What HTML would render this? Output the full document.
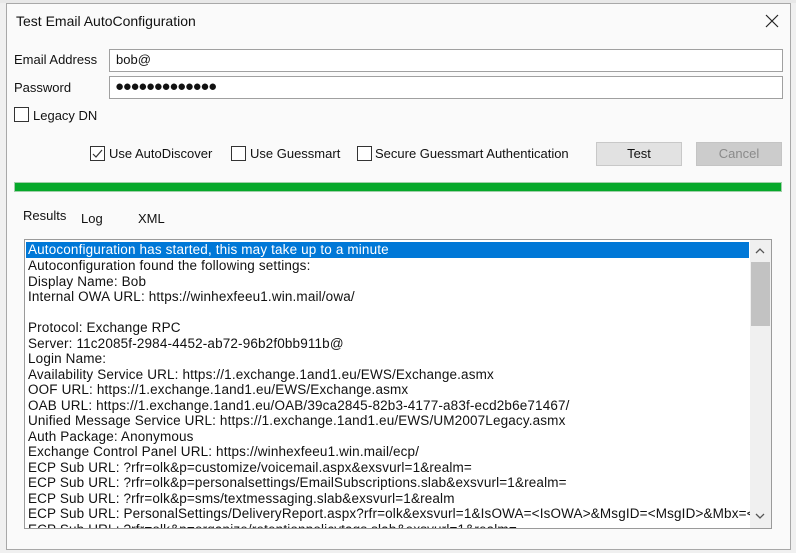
<!DOCTYPE html>
<html><head><style>
body{margin:0;width:796px;height:553px;background:#f0f0f0;position:relative;overflow:hidden;font-family:"Liberation Sans",sans-serif;color:#111}
.dlg{position:absolute;left:6px;top:3px;width:783px;height:545px;background:#fafafa;border:1px solid #a8a8a8;}
.a{position:absolute;white-space:nowrap}
.tb{position:absolute;background:#fff;border:1px solid #a0a0a0;height:21px}
.cb{position:absolute;width:13px;height:13px;border:1px solid #333;background:#fff}
.btn{position:absolute;height:22px;border:1px solid #c8c8c8;background:#e2e2e2;text-align:center;line-height:22px;font-size:13px}
.lst{position:absolute;left:24px;top:239px;width:746px;height:288px;border:1px solid #9a9a9a;background:#fff;overflow:hidden}
.ln{position:absolute;left:3px;font-size:13.5px;height:15.5px;line-height:15.5px;white-space:nowrap;letter-spacing:0.15px}
</style></head><body>
<div style="position:absolute;left:0;top:0;width:796px;height:3px;background:#e8e8e8"></div>
<div class="dlg"></div>
<div class="a" style="left:16px;top:13px;font-size:14px">Test Email AutoConfiguration</div>
<svg class="a" style="left:765px;top:14px" width="14" height="14"><path d="M1 1L13 13M13 1L1 13" stroke="#222" stroke-width="1.2"/></svg>
<div class="a" style="left:14px;top:52px;font-size:13px">Email Address</div>
<div class="tb" style="left:109px;top:49px;width:672px"></div>
<div class="a" style="left:116px;top:52px;font-size:13px">bob@</div>
<div class="a" style="left:14px;top:80px;font-size:13px">Password</div>
<div class="tb" style="left:109px;top:76px;width:672px"></div>
<div class="a" style="left:115px;top:78px;font-size:15px;letter-spacing:-1.3px">●●●●●●●●●●●●●</div>
<div class="cb" style="left:14px;top:107px"></div>
<div class="a" style="left:33px;top:108px;font-size:13px">Legacy DN</div>
<div class="cb" style="left:90px;top:146px"></div>
<svg class="a" style="left:91px;top:147px" width="13" height="13"><path d="M2 7L5 10L11 3" stroke="#333" stroke-width="1.2" fill="none"/></svg>
<div class="a" style="left:109px;top:146px;font-size:13px">Use AutoDiscover</div>
<div class="cb" style="left:231px;top:146px"></div>
<div class="a" style="left:250px;top:146px;font-size:13px">Use Guessmart</div>
<div class="cb" style="left:357px;top:146px"></div>
<div class="a" style="left:375px;top:146px;font-size:13px">Secure Guessmart Authentication</div>
<div class="btn" style="left:596px;top:142px;width:84px">Test</div>
<div class="btn" style="left:696px;top:142px;width:84px;background:#cccccc;color:#8a8a8a;border-color:#c4c4c4">Cancel</div>
<div class="a" style="left:14px;top:182px;width:768px;height:10px;background:#06a82a;border:1px solid #a0cfa8;box-sizing:border-box"></div>
<div class="a" style="left:23px;top:208px;font-size:13px">Results</div>
<div class="a" style="left:81px;top:211px;font-size:13px">Log</div>
<div class="a" style="left:138px;top:211px;font-size:13px">XML</div>
<div class="lst">
<div style="position:absolute;left:1px;top:2px;width:723px;height:16px;background:#0078d7"></div>
<div class="ln" style="top:2px;color:#fff">Autoconfiguration has started, this may take up to a minute</div>
<div class="ln" style="top:18px">Autoconfiguration found the following settings:</div>
<div class="ln" style="top:33.5px">Display Name: Bob</div>
<div class="ln" style="top:49px">Internal OWA URL: https://winhexfeeu1.win.mail/owa/</div>
<div class="ln" style="top:80px">Protocol: Exchange RPC</div>
<div class="ln" style="top:95.5px">Server: 11c2085f-2984-4452-ab72-96b2f0bb911b@</div>
<div class="ln" style="top:111px">Login Name:</div>
<div class="ln" style="top:126.5px">Availability Service URL: https://1.exchange.1and1.eu/EWS/Exchange.asmx</div>
<div class="ln" style="top:142px">OOF URL: https://1.exchange.1and1.eu/EWS/Exchange.asmx</div>
<div class="ln" style="top:157.5px">OAB URL: https://1.exchange.1and1.eu/OAB/39ca2845-82b3-4177-a83f-ecd2b6e71467/</div>
<div class="ln" style="top:173px">Unified Message Service URL: https://1.exchange.1and1.eu/EWS/UM2007Legacy.asmx</div>
<div class="ln" style="top:188.5px">Auth Package: Anonymous</div>
<div class="ln" style="top:204px">Exchange Control Panel URL: https://winhexfeeu1.win.mail/ecp/</div>
<div class="ln" style="top:219.5px">ECP Sub URL: ?rfr=olk&amp;p=customize/voicemail.aspx&amp;exsvurl=1&amp;realm=</div>
<div class="ln" style="top:235px">ECP Sub URL: ?rfr=olk&amp;p=personalsettings/EmailSubscriptions.slab&amp;exsvurl=1&amp;realm=</div>
<div class="ln" style="top:250.5px">ECP Sub URL: ?rfr=olk&amp;p=sms/textmessaging.slab&amp;exsvurl=1&amp;realm</div>
<div class="ln" style="top:266px">ECP Sub URL: PersonalSettings/DeliveryReport.aspx?rfr=olk&amp;exsvurl=1&amp;IsOWA=&lt;IsOWA&gt;&amp;MsgID=&lt;MsgID&gt;&amp;Mbx=&lt;</div>
<div class="ln" style="top:281.5px">ECP Sub URL: ?rfr=olk&amp;p=organize/retentionpolicytags.slab&amp;exsvurl=1&amp;realm=</div>
<div style="position:absolute;left:725px;top:0;width:21px;height:288px;background:#f0f0f0"></div>
<div style="position:absolute;left:726px;top:22px;width:19px;height:64px;background:#c2c2c2"></div>
<svg style="position:absolute;left:729px;top:6px" width="12" height="10"><path d="M2 7L6 3L10 7" stroke="#555" stroke-width="1.3" fill="none"/></svg>
<svg style="position:absolute;left:729px;top:271px" width="12" height="10"><path d="M2 3L6 7L10 3" stroke="#555" stroke-width="1.3" fill="none"/></svg>
</div>
</body></html>
